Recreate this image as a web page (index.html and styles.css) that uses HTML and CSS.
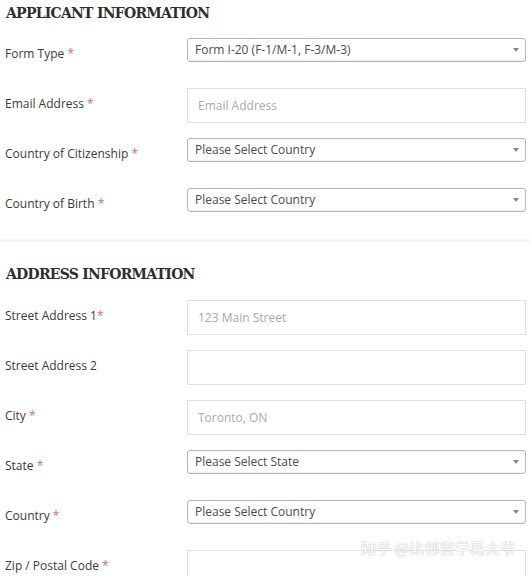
FILE: index.html
```html
<!DOCTYPE html>
<html>
<head>
<meta charset="utf-8">
<link rel="stylesheet" href="styles.css">
</head>
<body>
<div class="page">
  <h2 class="heading first">APPLICANT INFORMATION</h2>
  <div class="row"><div class="label">Form Type <span class="req">*</span></div><div class="select">Form I-20 (F-1/M-1, F-3/M-3)<span class="arrow"></span></div></div>
  <div class="row"><div class="label">Email Address <span class="req">*</span></div><div class="input ph">Email Address</div></div>
  <div class="row"><div class="label">Country of Citizenship <span class="req">*</span></div><div class="select">Please Select Country<span class="arrow"></span></div></div>
  <div class="row"><div class="label">Country of Birth <span class="req">*</span></div><div class="select">Please Select Country<span class="arrow"></span></div></div>
  <div class="sep"></div>
  <h2 class="heading second">ADDRESS INFORMATION</h2>
  <div class="row"><div class="label">Street Address 1<span class="req">*</span></div><div class="input ph">123 Main Street</div></div>
  <div class="row"><div class="label">Street Address 2</div><div class="input ph"></div></div>
  <div class="row"><div class="label">City <span class="req">*</span></div><div class="input ph">Toronto, ON</div></div>
  <div class="row"><div class="label">State <span class="req">*</span></div><div class="select">Please Select State<span class="arrow"></span></div></div>
  <div class="row"><div class="label">Country <span class="req">*</span></div><div class="select">Please Select Country<span class="arrow"></span></div></div>
  <div class="row"><div class="label">Zip / Postal Code <span class="req">*</span></div><div class="input ph"></div></div>
  <div class="watermark">知乎 @比邻留学葛大爷</div>
</div>
</body>
</html>
```

FILE: styles.css
```css
html, body { margin: 0; padding: 0; background: #fff; }
body { width: 530px; height: 576px; overflow: hidden; font-family: "Open Sans", "Liberation Sans", sans-serif; }
.page { position: relative; height: 576px; }
.heading {
  margin: 0;
  padding-left: 6px;
  font-family: "DejaVu Serif", "Liberation Serif", serif;
  font-weight: bold;
  font-size: 14px;
  line-height: 26px;
  color: #2e2e2e;
  letter-spacing: -0.75px;
}
.heading.first { margin-bottom: 12px; }
.heading.second { margin-top: 19px; margin-bottom: 13px; }
.row { display: flex; height: 50px; align-items: flex-start; }
.label {
  width: 182px;
  padding-left: 5px;
  padding-top: 8px;
  font-size: 12px;
  line-height: 16px;
  color: #3a3a3a;
}
.req { color: #d66; }
.select {
  position: relative;
  box-sizing: border-box;
  width: 339px;
  height: 24px;
  border: 1px solid #b4b4b4;
  border-radius: 3px;
  padding-left: 7px;
  font-size: 12px;
  line-height: 21px;
  color: #4a4a4a;
  box-shadow: inset 0 -1px 1px #f0f0f0;
}
.arrow {
  position: absolute;
  right: 6px;
  top: 9px;
  width: 0; height: 0;
  border-left: 3.5px solid transparent;
  border-right: 3.5px solid transparent;
  border-top: 4px solid #888;
}
.input {
  box-sizing: border-box;
  width: 339px;
  height: 35px;
  border: 1px solid #e0e0e0;
  padding-left: 10px;
  font-size: 12px;
  line-height: 33px;
}
.ph { color: #aaa; }
.sep {
  margin-top: 1px;
  height: 3px;
  background: linear-gradient(#fafafa, #f3f3f3, #fafafa);
}
.watermark {
  position: absolute;
  left: 361px;
  top: 538px;
  font-family: "Noto Sans CJK SC", sans-serif;
  font-size: 15px;
  line-height: 20px;
  letter-spacing: 0.2px;
  color: #fff;
  text-shadow: 0 0 1px #bbb, 0 0 1px #bbb;
}
```
